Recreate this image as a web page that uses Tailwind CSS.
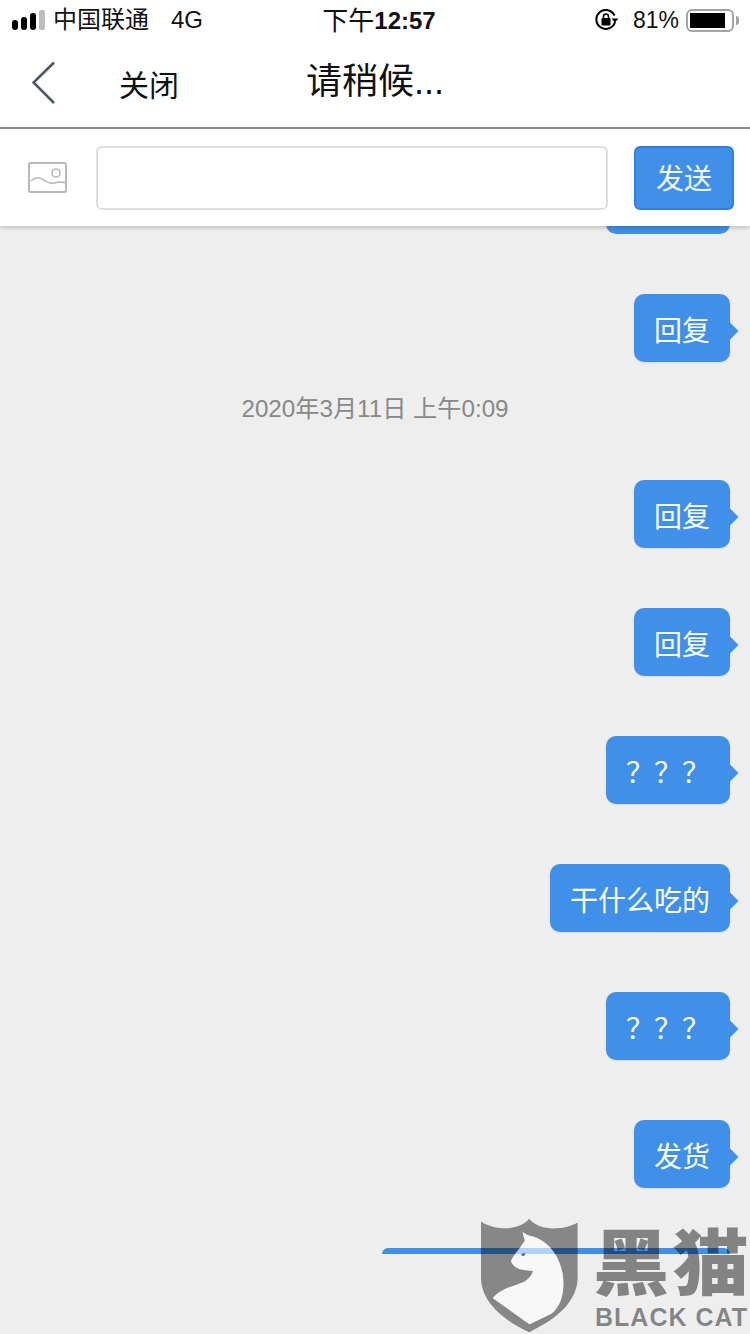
<!DOCTYPE html>
<html lang="zh-CN">
<head>
  <meta charset="UTF-8">
  <title>请稍候...</title>
  <script src="https://cdn.jsdelivr.net/npm/@tailwindcss/browser@4"></script>
</head>
<body class="bg-[#eeeeee] font-['Liberation_Sans','Noto_Sans_CJK_SC',sans-serif] text-black">
<div class="relative w-[750px] h-[1334px] overflow-hidden flex flex-col">

  <!-- status bar -->
  <div class="h-[40px] bg-white grid grid-cols-[1fr_auto_1fr] items-center shrink-0">
    <div class="flex items-center pl-[12px] text-[24px] text-[#111]">
      <div class="flex items-end gap-[3px] w-[33px] h-[20px]">
        <span class="w-[6px] h-[10px] rounded-[3px] bg-black"></span>
        <span class="w-[6px] h-[13px] rounded-[3px] bg-black"></span>
        <span class="w-[6px] h-[17px] rounded-[3px] bg-black"></span>
        <span class="w-[6px] h-[20px] rounded-[2px] bg-[#bdbdbd]"></span>
      </div>
      <span class="ml-[8px]">中国联通</span>
      <span class="ml-[22px]">4G</span>
    </div>
    <div class="flex items-center ml-[8px] mt-[2px] text-[#111]">
      <span class="text-[26px] leading-none">下午</span><span class="text-[24px] leading-none font-bold">12:57</span>
    </div>
    <div class="flex items-center justify-end pr-[11px]">
      <svg class="w-[24px] h-[22px]" viewBox="0 0 24 22" fill="none">
        <path d="M19.5 6.5A9.500 9.500 0 1 0 20 13" stroke="#000" stroke-width="2"/>
        <path d="M16.500 9.500h7l-3.500 4z" fill="#000"/>
        <rect x="6.500" y="9" width="9" height="7.500" rx="1" fill="#000"/>
        <path d="M8.500 9V7.500a2.500 2.500 0 0 1 5 0V9" stroke="#000" stroke-width="1.600"/>
      </svg>
      <span class="ml-[14px] text-[23px] leading-none text-[#111]">81%</span>
      <div class="ml-[7px] w-[48px] h-[23px] rounded-[6px] border-2 border-[#a3a3a3] p-[2px] flex">
        <div class="w-[35px] h-full bg-black"></div>
      </div>
      <div class="ml-[2px] w-[3px] h-[9px] rounded-r-[3px] bg-[#a3a3a3]"></div>
    </div>
  </div>

  <!-- nav -->
  <div class="h-[89px] bg-white border-b-2 border-[#8e8e8e] grid grid-cols-[1fr_auto_1fr] items-center shrink-0">
    <div class="flex items-center pl-[32px]">
      <svg class="w-[24px] h-[44px] mt-[-2px]" viewBox="0 0 24 44" fill="none">
        <path d="M22 1.500 1.500 21.500 22 42" stroke="#4f5666" stroke-width="2.600"/>
      </svg>
      <span class="ml-[63px] text-[30px] leading-none mt-[4px] text-[#111]">关闭</span>
    </div>
    <div class="text-[36px] leading-none mt-[-3px] text-[#111]">请稍候...</div>
    <div></div>
  </div>

  <!-- input bar -->
  <div class="relative z-10 h-[97px] bg-white shadow-[0_2px_4px_rgba(0,0,0,0.18)] flex items-start pt-[17px] shrink-0">
    <div class="w-[96px] h-[64px] flex items-center pl-[28px]">
      <svg class="w-[40px] h-[32px]" viewBox="0 0 40 32" fill="none" stroke="#b9b9b9">
        <rect x="1" y="1" width="37" height="29" rx="1.500" stroke-width="2"/>
        <circle cx="28" cy="11" r="4" stroke-width="1.600"/>
        <path d="M3 19c4-4 8-4 12-1.500s7 5 11 3.500 7-1 11-.5" stroke-width="1.600"/>
      </svg>
    </div>
    <div class="w-[512px] h-[64px] rounded-[6px] border-2 border-[#dedede] bg-white"></div>
    <div class="ml-[26px] w-[100px] h-[64px] pt-[4px] rounded-[6px] border-2 border-[#2f80e0] bg-[#4090ea] text-[#f4f8fe] text-[28px] flex items-center justify-center">发送</div>
  </div>

  <!-- messages -->
  <div class="flex-1 overflow-hidden flex flex-col items-end pr-[20px]">
    <div class="relative -mt-[60px] h-[68px] w-[124px] rounded-[10px] bg-[#4090ea] shrink-0"></div>

    <div class="relative mt-[60px] h-[68px] pt-[8px] rounded-[10px] bg-[#4090ea] shadow-[0_1px_2px_rgba(0,0,0,0.1)] px-[20px] flex items-center text-white text-[28px] shrink-0">
      回复<span class="absolute right-[-6px] top-[31px] w-[12px] h-[12px] rotate-45 bg-[#4090ea]"></span>
    </div>

    <div class="self-stretch pl-[20px] pb-[24px] h-[118px] flex items-center justify-center text-[24.200px] text-[#888888] shrink-0">2020年3月11日 上午0:09</div>

    <div class="relative h-[68px] pt-[8px] rounded-[10px] bg-[#4090ea] shadow-[0_1px_2px_rgba(0,0,0,0.1)] px-[20px] flex items-center text-white text-[28px] shrink-0">
      回复<span class="absolute right-[-6px] top-[31px] w-[12px] h-[12px] rotate-45 bg-[#4090ea]"></span>
    </div>
    <div class="relative mt-[60px] h-[68px] pt-[8px] rounded-[10px] bg-[#4090ea] shadow-[0_1px_2px_rgba(0,0,0,0.1)] px-[20px] flex items-center text-white text-[28px] shrink-0">
      回复<span class="absolute right-[-6px] top-[31px] w-[12px] h-[12px] rotate-45 bg-[#4090ea]"></span>
    </div>
    <div class="relative mt-[60px] h-[68px] pt-[8px] rounded-[10px] bg-[#4090ea] shadow-[0_1px_2px_rgba(0,0,0,0.1)] px-[20px] flex items-center text-white text-[28px] shrink-0">
      ？？？<span class="absolute right-[-6px] top-[31px] w-[12px] h-[12px] rotate-45 bg-[#4090ea]"></span>
    </div>
    <div class="relative mt-[60px] h-[68px] pt-[8px] rounded-[10px] bg-[#4090ea] shadow-[0_1px_2px_rgba(0,0,0,0.1)] px-[20px] flex items-center text-white text-[28px] shrink-0">
      干什么吃的<span class="absolute right-[-6px] top-[31px] w-[12px] h-[12px] rotate-45 bg-[#4090ea]"></span>
    </div>
    <div class="relative mt-[60px] h-[68px] pt-[8px] rounded-[10px] bg-[#4090ea] shadow-[0_1px_2px_rgba(0,0,0,0.1)] px-[20px] flex items-center text-white text-[28px] shrink-0">
      ？？？<span class="absolute right-[-6px] top-[31px] w-[12px] h-[12px] rotate-45 bg-[#4090ea]"></span>
    </div>
    <div class="relative mt-[60px] h-[68px] pt-[8px] rounded-[10px] bg-[#4090ea] shadow-[0_1px_2px_rgba(0,0,0,0.1)] px-[20px] flex items-center text-white text-[28px] shrink-0">
      发货<span class="absolute right-[-6px] top-[31px] w-[12px] h-[12px] rotate-45 bg-[#4090ea]"></span>
    </div>

    <div class="mt-[60px] w-[348px] h-[6px] rounded-t-[10px] bg-[#4090ea] shrink-0"></div>
  </div>

  <!-- watermark -->
  <div class="absolute left-[481px] top-[1218px] w-[269px] h-[116px]">
    <svg class="absolute left-0 top-0 w-[98px] h-[116px]" viewBox="333 55 295 348">
      <path fill-rule="evenodd" fill="#000" fill-opacity="0.43" d="M333 65c30 22 110 35 145-8 35 43 115 30 146 11v165c0 70-60 125-146 165-86-40-145-95-145-165z
        M458 97l18 10c60 10 105 70 105 145 0 40-12 70-35 90l-67 32-110-78c15-25 70-40 95-50 12-8 22-18 26-32-15-2-40-2-53-12-12-10-15-15-12-22 10-20 30-40 40-58z"/>
      <path d="M458 97l18 10c60 10 105 70 105 145 0 40-12 70-35 90l-67 32-110-78c15-25 70-40 95-50 12-8 22-18 26-32-15-2-40-2-53-12-12-10-15-15-12-22 10-20 30-40 40-58z" fill="#fff" fill-opacity="0.6"/>
      <path d="M454 163l12-4-2 9-8 1z" fill="#3d6ea8"/>
    </svg>
    <div class="absolute left-[112px] top-[4px] text-[72px] leading-none font-black scale-x-[1.06] origin-left text-black/45 font-['Noto_Sans_CJK_SC',sans-serif] whitespace-nowrap"><span class="tracking-[3px]">黑</span>猫</div>
    <div class="absolute left-[114px] top-[87px] text-[25px] leading-none font-bold tracking-[1px] text-black/45 whitespace-nowrap">BLACK CAT</div>
  </div>
</div>
</body>
</html>
